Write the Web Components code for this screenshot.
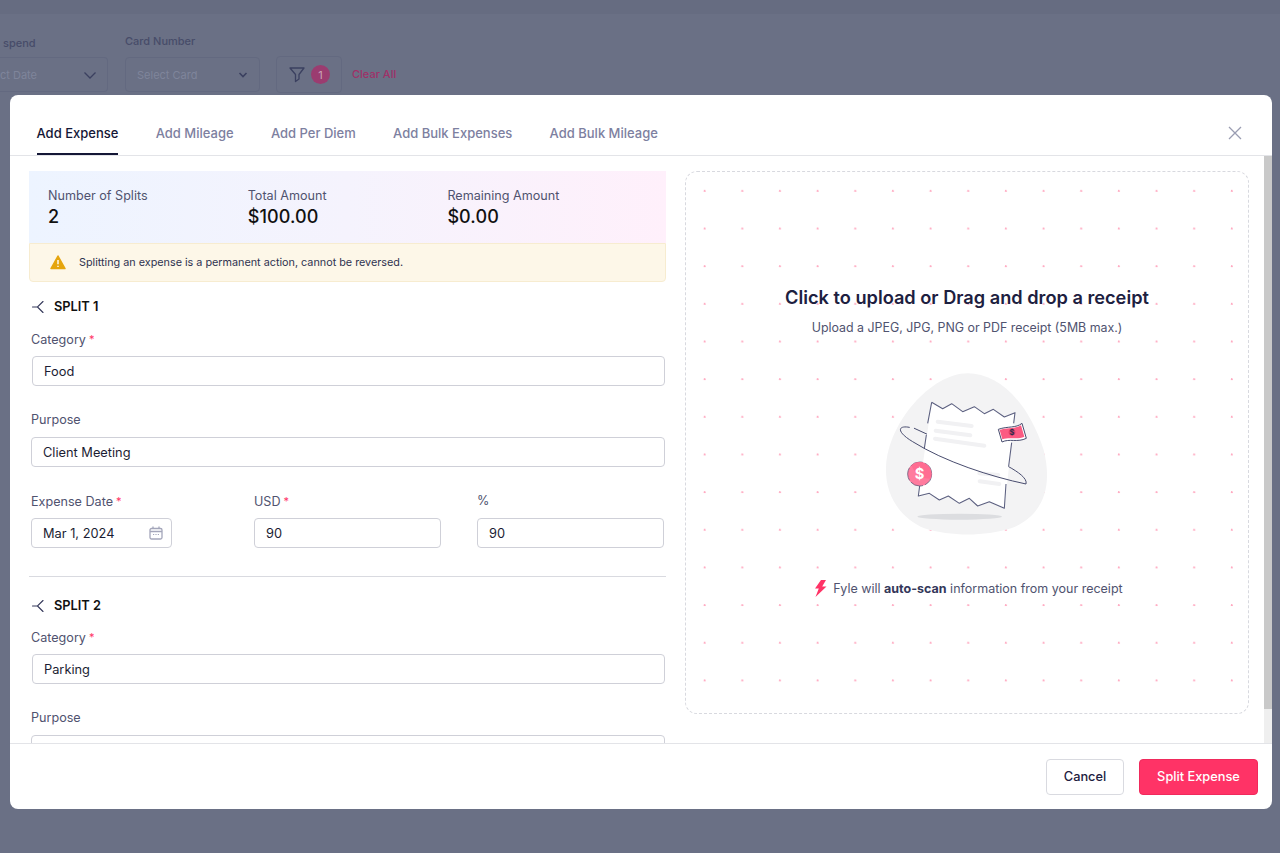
<!DOCTYPE html>
<html lang="en"><head><meta charset="utf-8"><title>Split Expense</title>
<style>
html,body{margin:0;padding:0;width:1280px;height:853px;overflow:hidden;background:#6a7085;font-family:Inter,"Liberation Sans",sans-serif}
</style></head><body>
<fy-backdrop></fy-backdrop>
<fy-modal>
  <fy-tabs slot="tabs"></fy-tabs>
  <fy-split-form slot="left"></fy-split-form>
  <fy-upload slot="right"></fy-upload>
  <fy-button slot="footer">Cancel</fy-button>
  <fy-button slot="footer" primary>Split Expense</fy-button>
</fy-modal>
<script>
const def=(name,html,setup)=>customElements.define(name,class extends HTMLElement{
  connectedCallback(){ if(this.shadowRoot) return; const r=this.attachShadow({mode:'open'});
    r.innerHTML=typeof html==='function'?html(this):html; if(setup) setup(r,this);} });

def('fy-backdrop',`<style>
:host{display:block;height:853px;box-sizing:border-box;color:#474c69;font-size:11px}
.top{height:14px;background:#666c81}
.bar{display:flex;align-items:flex-start;padding-top:19px}
.f{display:flex;flex-direction:column;margin-right:17px}
.l{height:16px;line-height:16px;font-weight:500}
.s{margin-top:8px;height:35px;box-sizing:border-box;border:1px solid #636980;border-radius:4px;display:flex;align-items:center;justify-content:space-between;padding:0 11px;color:#7f859b;font-size:11px}
.one .s{width:108px;padding:0 9px 0 0;border-left:0;border-top-left-radius:0;border-bottom-left-radius:0;margin-top:6px}
.one .l{margin-top:2px;padding-left:3px}
.two .s{width:135px}
.fb{margin-top:23px;margin-left:-1px;width:66px;height:37px;box-sizing:border-box;border:1px solid #636980;border-radius:4px;display:flex;align-items:center;gap:6px;padding-left:12px}
.b{width:19px;height:19px;border-radius:50%;background:#9b3c70;color:#c9a3b8;display:flex;align-items:center;justify-content:center;font-size:11px}
.c{margin:33px 0 0 10px;color:#a03068;font-weight:500;line-height:16px}
svg{fill:none;stroke:#3b4060;stroke-width:1.3}
</style><div class="top"></div><div class="bar">
<div class="f one"><div class="l">spend</div><div class="s"><span>ct Date</span><svg width="16" height="16" viewBox="0 0 16 16"><path d="M2.500 5.500 8 11l5.500-5.500"/></svg></div></div>
<div class="f two"><div class="l">Card Number</div><div class="s"><span>Select Card</span><svg width="10" height="10" viewBox="0 0 10 10" style="stroke-width:1.600"><path d="M1.500 3 5 6.500 8.500 3"/></svg></div></div>
<div class="fb"><svg width="16" height="17" viewBox="0 0 16 17"><path d="M1 2h14L10 8.500V13l-3.500 2.500V8.500Z" stroke-linejoin="round"/></svg><div class="b">1</div></div>
<div class="c">Clear All</div></div>`);

def('fy-modal',`<style>
:host{position:absolute;left:10px;top:95px;width:1262px;height:714px;background:#fff;border-radius:8px;display:flex;flex-direction:column;overflow:hidden}
.head{height:61px;box-sizing:border-box;border-bottom:1px solid #e3e4e8;position:relative;flex:none}
.x{position:absolute;right:30px;top:31px;width:14px;height:14px}
.body{flex:1;min-height:0;display:flex;position:relative}
.main{flex:1;min-width:0;display:flex;gap:19px;padding:15px 15px 0 19px;overflow:hidden}
.sb{width:8px;flex:none;background:#efefef}
.th{height:553px;background:#c9c9c9}
.foot{height:66px;box-sizing:border-box;border-top:1px solid #e3e4e8;flex:none;display:flex;justify-content:flex-end;align-items:center;gap:15px;padding:0 14px 0 0}
</style>
<div class="head"><slot name="tabs"></slot><svg class="x" viewBox="0 0 14 14" fill="none" stroke="#9a9db2" stroke-width="1.300"><path d="M1 1l12 12M13 1 1 13"/></svg></div>
<div class="body"><div class="main"><slot name="left"></slot><slot name="right"></slot></div><div class="sb"><div class="th"></div></div></div>
<div class="foot"><slot name="footer"></slot></div>`);

def('fy-tabs',`<style>
:host{display:flex;gap:37.300px;padding-left:26.500px;height:60px;box-sizing:border-box;font-size:13px;font-weight:500;color:#7d80a0}
div{height:60px;box-sizing:border-box;padding-top:30px;line-height:16px;white-space:nowrap}
.on{color:#141736;border-bottom:2px solid #141736}
</style><div class="on">Add Expense</div><div>Add Mileage</div><div>Add Per Diem</div><div>Add Bulk Expenses</div><div>Add Bulk Mileage</div>`);

def('fy-stat',(h)=>`<style>
:host{display:block;width:199.700px}
.l{font-size:12.600px;line-height:16px;color:#50536f}
.v{font-size:18px;line-height:22px;margin-top:2px;color:#111;font-weight:500;letter-spacing:.1px}
</style><div class="l">${h.getAttribute('label')}</div><div class="v">${h.getAttribute('value')}</div>`);

def('fy-alert',`<style>
:host{display:flex;align-items:center;height:39px;box-sizing:border-box;background:#fdf7e8;border:1px solid #f7ecd0;border-radius:0 0 4px 4px;padding-left:20px;gap:13px;font-size:10.800px;color:#2f3350}
svg{flex:none}
</style><svg width="16" height="15" viewBox="0 0 16 15"><path d="M8 1 15 13.500H1Z" fill="#e5a50e" stroke="#e5a50e" stroke-width="1.500" stroke-linejoin="round"/><path d="M8 5v4.200M8 10.800v1.300" stroke="#fff" stroke-width="1.400"/></svg><slot></slot>`);

def('fy-split-title',`<style>
:host{display:flex;align-items:center;gap:10px;height:16px;padding-left:3px;font-size:12.800px;font-weight:600;color:#111;line-height:16px}
svg{flex:none}
</style><svg width="12" height="14" viewBox="0 0 12 14" fill="none" stroke="#34385a" stroke-width="1.100" stroke-linecap="round"><path d="M.5 7h5L11 1.500M5.500 7 11 12.500"/></svg><slot></slot>`);

def('fy-field',(h)=>`<style>
:host{display:block}
.l{font-size:12.600px;line-height:16px;color:#50536f;height:16px;margin-bottom:9px}
:host(.cat) .l{margin-left:-1px}
.l i{color:#ff3366;font-style:normal;font-size:11px;margin-left:3px;vertical-align:1px}
.i{height:30px;box-sizing:border-box;border:1px solid #cfd0d8;border-radius:4px;display:flex;align-items:center;justify-content:space-between;padding:1px 8px 0 11px;font-size:12.800px;color:#1b1d33;background:#fff}
svg{flex:none;margin-top:-1px}
</style><div class="l">${h.getAttribute('label')}${h.hasAttribute('req')?'<i>*</i>':''}</div><div class="i"><span>${h.getAttribute('value')||''}</span>${h.hasAttribute('date')?'<svg width="14" height="14" viewBox="0 0 14 14" fill="none" stroke="#a4a6ba" stroke-width="1.300"><rect x="1" y="2.500" width="12" height="10.500" rx="1.500"/><path d="M1 5.500h12M4 .5v2M10 .5v2" /><path d="M4 8.500h1.200M6.400 8.500h1.200M8.800 8.500H10" stroke-width="1"/></svg>':''}</div>`);

def('fy-split-form',`<style>
:host{display:block;width:637px;flex:none;overflow:hidden}
.sum{height:72px;box-sizing:border-box;padding:17px 0 0 19px;display:flex;background:linear-gradient(90deg,#edf4ff 0%,#f5f3fd 50%,#fff0fb 100%)}
fy-split-title{margin-top:17px}
.row{display:grid;grid-template-columns:187px 187px 187px;column-gap:36px;margin-right:1px;margin-left:2px;margin-top:26px}
.date{width:141px}
hr{border:0;border-top:1px solid #d9dae0;margin:28px 0 0;}
.s2{margin-top:21px}
.cat{margin-left:3px;margin-right:1px;margin-top:16px}
.s2 + .cat{margin-top:15px}
.pur{margin-left:2px;margin-right:1px;margin-top:26px}
</style>
<div class="sum"><fy-stat label="Number of Splits" value="2"></fy-stat><fy-stat label="Total Amount" value="$100.00"></fy-stat><fy-stat label="Remaining Amount" value="$0.00"></fy-stat></div>
<fy-alert>Splitting an expense is a permanent action, cannot be reversed.</fy-alert>
<fy-split-title>SPLIT 1</fy-split-title>
<fy-field class="cat" label="Category" req value="Food"></fy-field>
<fy-field class="pur" label="Purpose" value="Client Meeting"></fy-field>
<div class="row"><fy-field class="date" label="Expense Date" req value="Mar 1, 2024" date></fy-field><fy-field label="USD" req value="90"></fy-field><fy-field label="%" value="90"></fy-field></div>
<hr>
<fy-split-title class="s2">SPLIT 2</fy-split-title>
<fy-field class="cat" label="Category" req value="Parking"></fy-field>
<fy-field class="pur" label="Purpose" value=""></fy-field>`);

def('fy-upload',`<style>
:host{display:flex;flex-direction:column;align-items:center;width:564px;height:543px;box-sizing:border-box;border:1px dashed #d8d9df;border-radius:12px;flex:none;color:#50536f;
background-image:radial-gradient(circle at 18.500px 19px,#ffa8c0 0,#ffa8c0 .8px,transparent 1.300px);background-size:37.670px 37.670px;background-position:0 0;text-align:center}
h2{margin:113px 0 0;font-size:18.200px;line-height:24px;font-weight:600;color:#1d2040}
p{margin:11px 0 0;font-size:12.400px;line-height:16px;color:#50536f}
svg.ill{display:block;margin-top:24px;margin-left:-3px;flex:none}
.note{margin-top:40px;display:flex;align-items:center;gap:6px;font-size:12.500px;line-height:16px;margin-left:3px;background:#fff}
b{font-weight:700;color:#34375a}
</style>
<h2>Click to upload or Drag and drop a receipt</h2>
<p>Upload a JPEG, JPG, PNG or PDF receipt (5MB max.)</p>
<svg class="ill" width="210" height="180" viewBox="0 0 630 540" fill="none">
<path d="M320 40C410 40 500 120 548 270C578 390 540 470 450 505C370 530 270 530 190 505C110 470 72 400 75 320C80 190 210 40 320 40Z" fill="#f3f3f4"/>
<ellipse cx="296" cy="470" rx="127" ry="9" fill="#dcdde0"/>
<path d="M212 127 245 146 272 131 305 155 340 140 370 161 397 148 430 171 462 158 430 445 385 425 350 438 325 415 295 430 262 408 235 420 205 400 172 408Z" fill="#fff"/>
<path d="M212 127 245 146 272 131 305 155 340 140 370 161 397 148 430 171 462 158 458 190M452 248 443 318M435 372 430 445 385 425 350 438 325 415 295 430 262 408 235 420 205 400 172 408 176 378M190 265 196 225M200 190 212 127" stroke="#5c6080" stroke-width="3.200" stroke-linejoin="round"/>
<path d="M230 185 332 198M224 212 328 226M222 236 370 257M355 340 412 345M356 364 415 372" stroke="#f1f1f3" stroke-width="12" stroke-linecap="round"/>
<path d="M160 205 197 222M145 202C110 195 105 215 155 245C250 305 390 350 495 372C500 355 470 335 443 320" stroke="#484c6e" stroke-width="3" stroke-linecap="round"/>
<circle cx="176" cy="342" r="36" fill="#ff7b9e" stroke="#484c6e" stroke-width="2" stroke-dasharray="40 6"/>
<path d="M176 306a36 36 0 0 1 33 50 60 60 0 0 1-58-40 36 36 0 0 1 25-10Z" fill="#ff6d92"/>
<text x="176" y="358" font-family="Inter,'Liberation Sans',sans-serif" font-size="44" font-weight="700" fill="#fff" text-anchor="middle">$</text>
<path d="M412 208C440 198 465 205 483 190L496 235C470 248 445 235 423 246Z" fill="#fff" stroke="#484c6e" stroke-width="3" stroke-linejoin="round"/>
<path d="M416 210C440 202 462 208 480 196L490 230C468 240 445 230 424 238Z" fill="#fb5b82"/>
<circle cx="453" cy="217" r="10" fill="#e0406a"/>
<text x="453" y="225" font-family="Inter,'Liberation Sans',sans-serif" font-size="22" font-weight="700" fill="#2b2e4c" text-anchor="middle">$</text>
</svg>
<div class="note"><svg width="13" height="17" viewBox="0 0 13 17"><path d="M7 0 1 8.500h3.800L1.500 17 12.500 6.500H8.200L12 0Z" fill="#ff3366"/></svg><span>Fyle will <b>auto-scan</b> information from your receipt</span></div>`);

def('fy-button',(h)=>`<style>
:host{display:block;height:36px}
div{height:36px;box-sizing:border-box;border-radius:4px;display:flex;align-items:center;justify-content:center;font-size:12.800px;font-weight:500;
${h.hasAttribute('primary')?'width:119px;background:#ff3366;border:1px solid #f02a5c;color:#fff':'width:78px;background:#fff;border:1px solid #d9dae0;color:#1d2040'}}
</style><div><slot></slot></div>`);
</script>
</body></html>
